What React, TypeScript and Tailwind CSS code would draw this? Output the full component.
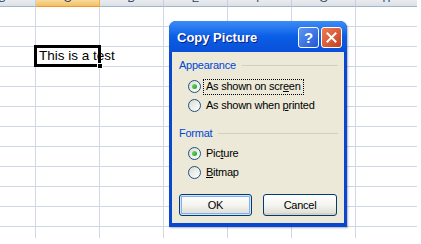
import React from "react";

const COLS = [
  { w: "w-[36px]", letter: "B" },
  { w: "w-[64px]", letter: "C" },
  { w: "w-[64px]", letter: "D" },
  { w: "w-[64px]", letter: "E" },
  { w: "w-[64px]", letter: "F" },
  { w: "w-[64px]", letter: "G" },
  { w: "w-[61px]", letter: "H" },
];

const ROWS = 11;

function Radio({ checked }: { checked?: boolean }) {
  return (
    <span className="relative w-[13px] h-[13px] shrink-0 rounded-full border border-[#1c5180] bg-gradient-to-br from-[#dcdcd4] to-[#ffffff] flex items-center justify-center">
      {checked && (
        <span className="w-[5px] h-[5px] rounded-full bg-gradient-to-br from-[#6fe06b] to-[#1f9d1f]" />
      )}
    </span>
  );
}

function Option({
  checked,
  focused,
  children,
}: {
  checked?: boolean;
  focused?: boolean;
  children: React.ReactNode;
}) {
  return (
    <div className="h-[19px] flex items-center pl-[16px]">
      <Radio checked={checked} />
      <span
        className={`ml-[2px] px-[2px] h-[16px] flex items-center whitespace-nowrap border border-dotted ${
          focused ? "border-black" : "border-transparent"
        }`}
      >
        <span>{children}</span>
      </span>
    </div>
  );
}

function GroupLabel({ children }: { children: React.ReactNode }) {
  return (
    <div className="h-[14px] flex items-center pl-[7px]">
      <span className="text-[#0046d5]">{children}</span>
      <div className="flex-1 h-px bg-[#d0d0bf] ml-[6px] mr-[6px]" />
    </div>
  );
}

function XpButton({ children, isDefault }: { children: React.ReactNode; isDefault?: boolean }) {
  return (
    <div
      className={`h-[22px] flex items-center justify-center rounded-[3px] border border-[#003c74] bg-gradient-to-b from-[#ffffff] via-[#f4f4f0] to-[#dcdbd3] ${
        isDefault
          ? "shadow-[inset_0_0_0_1px_#cee7ff,inset_0_0_0_2px_#89ade4]"
          : "shadow-[inset_0_-2px_0_0_#d6d0c5]"
      }`}
    >
      {children}
    </div>
  );
}

function CopyPictureDialog() {
  return (
    <div className="absolute left-[169px] top-[21px] w-[178px] h-[206px] flex flex-col rounded-t-[7px] overflow-hidden bg-[#0847d2] shadow-[1px_1px_2px_rgba(0,0,0,0.3)]">
      {/* title bar */}
      <div className="h-[31px] shrink-0 flex items-center pt-[2px] pl-[8px] pr-[5px] bg-gradient-to-b from-[#3b8cf6] via-[#0a5ee6] to-[#0a50d8]">
        <span className="flex-1 text-white font-bold text-[13px] [text-shadow:1px_1px_0_#0a1f80]">
          Copy Picture
        </span>
        <div className="w-[21px] h-[21px] rounded-[3px] border border-white bg-gradient-to-br from-[#5d98f5] to-[#2356d3] flex items-center justify-center text-white font-bold text-[15px] leading-none">
          ?
        </div>
        <div className="ml-[2px] w-[21px] h-[21px] rounded-[3px] border border-white bg-gradient-to-br from-[#ee7b53] to-[#c53f1c] flex items-center justify-center">
          <svg width="11" height="11" viewBox="0 0 11 11">
            <path d="M1.5 1.5 L9.5 9.5 M9.5 1.5 L1.5 9.5" stroke="white" strokeWidth="2" strokeLinecap="square" />
          </svg>
        </div>
      </div>

      {/* body */}
      <div className="mx-[3px] h-[171px] bg-[#ece9d8] flex flex-col text-[11px] tracking-[-0.25px] text-black">
        <div className="mt-[6px]">
          <GroupLabel>Appearance</GroupLabel>
        </div>
        <div className="mt-[5px]">
          <Option checked focused>
            As shown on scr<span className="underline">e</span>en
          </Option>
          <Option>
            As shown when <span className="underline">p</span>rinted
          </Option>
        </div>
        <div className="mt-[11px]">
          <GroupLabel>Format</GroupLabel>
        </div>
        <div className="mt-[4px]">
          <Option checked>
            Pic<span className="underline">t</span>ure
          </Option>
          <Option>
            <span className="underline">B</span>itmap
          </Option>
        </div>
        <div className="mt-[12px] flex pl-[7px] gap-[11px]">
          <div className="w-[73px]">
            <XpButton isDefault>OK</XpButton>
          </div>
          <div className="w-[74px]">
            <XpButton>Cancel</XpButton>
          </div>
        </div>
      </div>
    </div>
  );
}

export default function App() {
  return (
    <div className="relative w-[421px] h-[244px] bg-white overflow-hidden font-['Liberation_Sans',Arial,sans-serif]">
      <div className="w-[417px] h-[238px] flex flex-col">
        {/* column headers, scrolled so only the bottoms show */}
        <div className="flex h-[7px] shrink-0">
          {COLS.map((c, i) => (
            <div
              key={c.letter}
              className={`${c.w} h-[7px] overflow-hidden flex justify-center border-b ${
                i < COLS.length - 1 ? "border-r" : ""
              } ${
                i === 1
                  ? "bg-gradient-to-b from-[#f9d99f] to-[#f1c15f] border-b-[#f29536] border-r-[#f2b34d]"
                  : "bg-gradient-to-b from-[#e8ebef] to-[#dde1e6] border-b-[#9eb6ce] border-r-[#c6d0dc]"
              }`}
            >
              <span
                className={`-mt-[7px] text-[11px] leading-[11px] text-[#27415f] ${
                  i === 0 ? "-ml-[31px]" : ""
                }`}
              >
                {c.letter}
              </span>
            </div>
          ))}
        </div>

        {/* cells */}
        {Array.from({ length: ROWS + 1 }).map((_, r) => (
          <div key={r} className={`flex shrink-0 ${r === ROWS ? "h-[11px]" : "h-[20px]"}`}>
            {COLS.map((c, i) => (
              <div
                key={c.letter}
                className={`${c.w} h-full border-[#d0d7e5] ${r < ROWS ? "border-b" : ""} ${
                  i < COLS.length - 1 ? "border-r" : ""
                } ${r === 2 && i === 1 ? "relative flex items-center pl-[3px]" : ""}`}
              >
                {r === 2 && i === 1 && (
                  <span className="relative z-10 whitespace-nowrap text-[13.5px] text-black">
                    This is a test
                  </span>
                )}
              </div>
            ))}
          </div>
        ))}
      </div>

      {/* active cell selection */}
      <div className="absolute left-[34px] top-[45px] w-[67px] h-[22px] border-[3px] border-black z-20" />
      <div className="absolute left-[97px] top-[63px] w-[6px] h-[6px] bg-black border border-white z-30" />

      <CopyPictureDialog />
    </div>
  );
}
